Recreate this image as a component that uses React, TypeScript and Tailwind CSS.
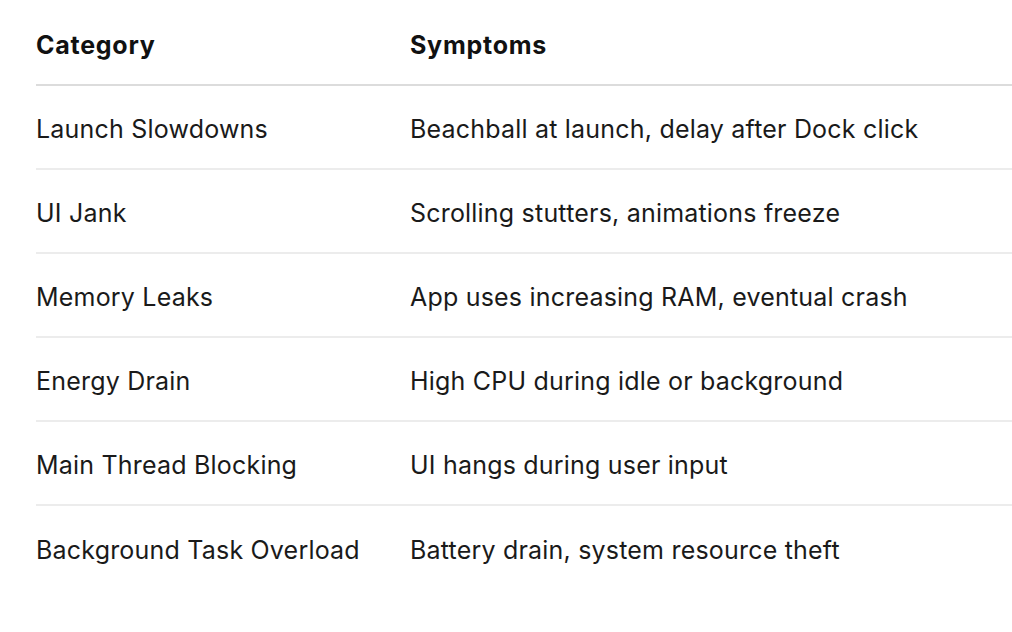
import React from "react";

const rows: [string, string][] = [
  ["Launch Slowdowns", "Beachball at launch, delay after Dock click"],
  ["UI Jank", "Scrolling stutters, animations freeze"],
  ["Memory Leaks", "App uses increasing RAM, eventual crash"],
  ["Energy Drain", "High CPU during idle or background"],
  ["Main Thread Blocking", "UI hangs during user input"],
  ["Background Task Overload", "Battery drain, system resource theft"],
];

export default function App() {
  return (
    <div
      className="w-[1012px] h-[632px] bg-white overflow-hidden pl-[36px] text-[#1a1a1a]"
      style={{ fontFamily: "Inter, 'Noto Sans', sans-serif" }}
    >
      <div className="grid grid-cols-[374px_1fr] h-[86px] items-center pt-[8px] border-b-[2px] border-[#dcdcdc] text-[25px] font-bold tracking-[0.75px] text-[#111]">
        <div>Category</div>
        <div>Symptoms</div>
      </div>
      {rows.map(([a, b], i) => (
        <div
          key={i}
          className={`grid grid-cols-[374px_1fr] h-[84px] items-center pt-[6px] text-[25px] tracking-[0.2px] ${
            i < rows.length - 1 ? "border-b-[2px] border-[#ececec]" : ""
          }`}
        >
          <div>{a}</div>
          <div>{b}</div>
        </div>
      ))}
    </div>
  );
}
